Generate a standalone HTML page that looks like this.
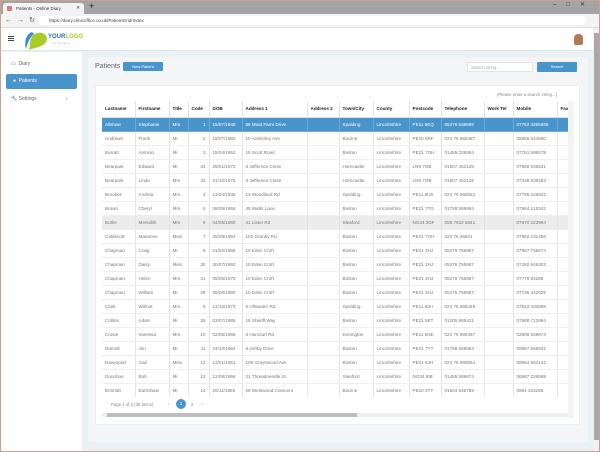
<!DOCTYPE html>
<html><head><meta charset="utf-8"><style>
*{box-sizing:border-box;margin:0;padding:0}
body{width:600px;height:452px;overflow:hidden;font-family:"Liberation Sans",sans-serif;background:#eaf1f4;position:relative;color:#666}
.a{position:absolute}
#frame{left:0;top:0;width:600px;height:452px;border:1px solid #c9a292;z-index:20;pointer-events:none}
table{border-collapse:collapse;table-layout:fixed;font-size:4.6px}
td,th{height:14px;border-right:1px solid #e4e4e4;border-bottom:1px solid #eee;padding:0 3px;white-space:nowrap;overflow:hidden;text-align:left;color:#777}
th{font-weight:bold;color:#222;height:16px;border-bottom:1px solid #ddd}
tr.sel td{background:#4a94cc;color:#fff;border-color:#6aa8d6}
tr.g td{background:#ececec}
td.r{text-align:right}
</style></head><body>
<div class="a" id="frame"></div>
<div class="a" style="left:0;top:0;width:600px;height:14px;background:#a4a4a4"></div>
<div class="a" style="left:3px;top:3px;width:81px;height:11px;background:#f3f3f3;border-radius:3px 3px 0 0;font-size:4.5px;color:#333;padding:3px 0 0 13px">Patients - Online Diary<span style="position:absolute;left:4px;top:3px;width:5px;height:5px;background:#d77;border-radius:1px"></span><span style="position:absolute;right:4px;top:2px">✕</span></div>
<div class="a" style="left:89px;top:1px;font-size:9px;color:#222">+</div>
<div class="a" style="left:553px;top:1px;font-size:6px;color:#333;letter-spacing:10px">–□✕</div>
<div class="a" style="left:0;top:14px;width:600px;height:14px;background:#f3f3f3;border-bottom:1px solid #ddd"></div>
<div class="a" style="left:5px;top:16px;font-size:7px;color:#555;letter-spacing:5px">←→↻</div>
<div class="a" style="left:38px;top:16px;width:548px;height:9px;background:#fff;border-radius:5px;font-size:4.6px;color:#444;padding:2px 0 0 11px">https://diary.clinicoffice.co.uk/PatientGrid/Index</div>
<div class="a" style="left:0;top:28px;width:593px;height:23px;background:#fff;border-bottom:1.5px solid #dfe6ea"></div>
<div class="a" style="left:8px;top:36px;width:6px;height:1px;background:#444;box-shadow:0 2px 0 #444,0 4px 0 #444"></div>
<svg class="a" style="left:22px;top:30px" width="30" height="21"><path d="M10 2 C4 4 2 12 4 19 C6 12 8 7 12 4Z" fill="#3a8fd0"/><path d="M11 5 C18 0 28 4 24 12 C20 18 10 18 7 20 C8 14 8 8 11 5Z" fill="#a8cc2a"/></svg>
<div class="a" style="left:48px;top:34px;font-size:6px;font-weight:bold;color:#2b6db0">YOUR<span style="color:#a8cc2a">LOGO</span></div>
<div class="a" style="left:52px;top:41px;font-size:3px;color:#999;letter-spacing:1px">company</div>
<div class="a" style="left:574px;top:34px;width:9px;height:11px;background:#b07a55;border-radius:4px 4px 2px 2px"></div>
<div class="a" style="left:593px;top:28px;width:7px;height:424px;background:#f1f1f1"></div>
<div class="a" style="left:594px;top:33px;width:5px;height:407px;background:#a9a9a9"></div>
<div class="a" style="left:1px;top:52px;width:81px;height:400px;background:#fff"></div>
<div class="a" style="left:11px;top:61px;font-size:5px;color:#666">▭ &nbsp;Diary</div>
<div class="a" style="left:6px;top:74px;width:71px;height:15px;background:#4a94cc;border-radius:2px;font-size:5px;color:#fff;padding:4px 0 0 7px">● &nbsp;Patients</div>
<div class="a" style="left:11px;top:96px;font-size:5px;color:#666">🔧 Settings<span style="position:absolute;left:55px">‹</span></div>
<div class="a" style="left:88px;top:57px;width:500px;height:385px;background:#f3f5f6;border-radius:2px"></div>
<div class="a" style="left:95px;top:63px;font-size:7px;color:#666">Patients</div>
<div class="a" style="left:123px;top:62px;width:40px;height:9px;background:#4a94cc;border-radius:1px;font-size:4px;color:#fff;text-align:center;line-height:9px">New Patient</div>
<div class="a" style="left:467px;top:62px;width:66px;height:10px;background:#fff;border:1px solid #e4e4e4;font-size:4.3px;color:#aaa;padding:2px 0 0 3px">Search string...</div>
<div class="a" style="left:537px;top:62px;width:40px;height:10px;background:#4a94cc;border-radius:1px;font-size:4px;color:#fff;text-align:center;line-height:10px">Search</div>
<div class="a" style="left:95px;top:85px;width:485px;height:340px;background:#fff;border:1px solid #eee"></div>
<div class="a" style="left:497px;top:92px;font-size:4.3px;color:#888">(Please enter a search string...)</div>
<div class="a" style="left:102px;top:101px;width:466px;height:317px;overflow:hidden;background:#fff">
<table style="width:490px">
<colgroup><col style="width:33px"><col style="width:34px"><col style="width:19px"><col style="width:21px"><col style="width:33px"><col style="width:65px"><col style="width:32px"><col style="width:34px"><col style="width:36px"><col style="width:32px"><col style="width:43px"><col style="width:29px"><col style="width:44px"><col style="width:35px"></colgroup>
<tr><th>Lastname</th><th>Firstname</th><th>Title</th><th>Code</th><th>DOB</th><th>Address 1</th><th>Address 2</th><th>Town/City</th><th>County</th><th>Postcode</th><th>Telephone</th><th>Work Tel</th><th>Mobile</th><th>Fax</th></tr>
<tr class="sel"><td>Allshaw</td><td>Stephanie</td><td>Mrs</td><td class="r">1</td><td>15/07/1940</td><td>85 Moat Farm Drive</td><td></td><td>Spalding</td><td>Lincolnshire</td><td>PE11 9EQ</td><td>05276 536985</td><td></td><td>07752 3265985</td><td></td></tr>
<tr><td>Andrews</td><td>Frank</td><td>Mr</td><td class="r">2</td><td>18/07/1960</td><td>10 Amberley Ave</td><td></td><td>Bourne</td><td>Lincolnshire</td><td>PE10 5RF</td><td>024 76 655487</td><td></td><td>05856 644690</td><td></td></tr>
<tr><td>Barratt</td><td>Antonio</td><td>Mr</td><td class="r">3</td><td>15/04/1952</td><td>15 Scott Road</td><td></td><td>Boston</td><td>Lincolnshire</td><td>PE21 7OH</td><td>01455 326954</td><td></td><td>07761 598478</td><td></td></tr>
<tr><td>Bearpark</td><td>Edward</td><td>Mr</td><td class="r">34</td><td>25/01/1972</td><td>3 Jefferson Close</td><td></td><td>Horncastle</td><td>Lincolnshire</td><td>LN9 7OB</td><td>01507 452135</td><td></td><td>07868 535531</td><td></td></tr>
<tr><td>Bearpark</td><td>Linda</td><td>Mrs</td><td class="r">33</td><td>21/10/1975</td><td>3 Jefferson Close</td><td></td><td>Horncastle</td><td>Lincolnshire</td><td>LN9 7OB</td><td>01507 452135</td><td></td><td>07336 839283</td><td></td></tr>
<tr><td>Brookes</td><td>Andrea</td><td>Mrs</td><td class="r">4</td><td>13/04/1935</td><td>13 Woodland Rd</td><td></td><td>Spalding</td><td>Lincolnshire</td><td>PE11 8US</td><td>024 76 566652</td><td></td><td>07795 226532</td><td></td></tr>
<tr><td>Brown</td><td>Cheryl</td><td>Mrs</td><td class="r">5</td><td>08/09/1955</td><td>45 Watts Lane</td><td></td><td>Boston</td><td>Lincolnshire</td><td>PE21 7TG</td><td>01788 559984</td><td></td><td>07984 215342</td><td></td></tr>
<tr class="g"><td>Butler</td><td>Meredith</td><td>Mrs</td><td class="r">6</td><td>04/05/1960</td><td>41 Lister Rd</td><td></td><td>Sleaford</td><td>Lincolnshire</td><td>NG34 3DF</td><td>058 7632 5841</td><td></td><td>07970 223984</td><td></td></tr>
<tr><td>Caldecott</td><td>Marianne</td><td>Miss</td><td class="r">7</td><td>25/09/1954</td><td>102 Granby Rd</td><td></td><td>Boston</td><td>Lincolnshire</td><td>PE21 7OH</td><td>024 76 45621</td><td></td><td>07982 231456</td><td></td></tr>
<tr><td>Chapman</td><td>Craig</td><td>Mr</td><td class="r">8</td><td>01/02/1968</td><td>10 Eden Croft</td><td></td><td>Boston</td><td>Lincolnshire</td><td>PE21 3HJ</td><td>05276 755987</td><td></td><td>07987 755874</td><td></td></tr>
<tr><td>Chapman</td><td>Daisy</td><td>Miss</td><td class="r">30</td><td>30/07/1992</td><td>10 Eden Croft</td><td></td><td>Boston</td><td>Lincolnshire</td><td>PE21 3HJ</td><td>05276 755987</td><td></td><td>07280 645303</td><td></td></tr>
<tr><td>Chapman</td><td>Helen</td><td>Mrs</td><td class="r">31</td><td>05/06/1970</td><td>10 Eden Croft</td><td></td><td>Boston</td><td>Lincolnshire</td><td>PE21 3HJ</td><td>05276 755987</td><td></td><td>07779 94285</td><td></td></tr>
<tr><td>Chapman</td><td>William</td><td>Mr</td><td class="r">29</td><td>06/06/1990</td><td>10 Eden Croft</td><td></td><td>Boston</td><td>Lincolnshire</td><td>PE21 3HJ</td><td>05276 755987</td><td></td><td>07735 442025</td><td></td></tr>
<tr><td>Clark</td><td>Wilmot</td><td>Mrs</td><td class="r">9</td><td>13/10/1973</td><td>6 Ullswater Rd</td><td></td><td>Spalding</td><td>Lincolnshire</td><td>PE11 8JH</td><td>024 76 665448</td><td></td><td>07542 332698</td><td></td></tr>
<tr><td>Collins</td><td>Adam</td><td>Mr</td><td class="r">25</td><td>03/07/1985</td><td>15 Sheriff Way</td><td></td><td>Boston</td><td>Lincolnshire</td><td>PE21 9ET</td><td>01205 985421</td><td></td><td>07968 712954</td><td></td></tr>
<tr><td>Crowe</td><td>Vanessa</td><td>Mrs</td><td class="r">10</td><td>02/05/1958</td><td>3 Harcourt Rd</td><td></td><td>Donington</td><td>Lincolnshire</td><td>PE11 6NE</td><td>024 76 665467</td><td></td><td>02698 559874</td><td></td></tr>
<tr><td>Darnell</td><td>Jim</td><td>Mr</td><td class="r">11</td><td>24/10/1964</td><td>9 Ashby Drive</td><td></td><td>Boston</td><td>Lincolnshire</td><td>PE21 7YT</td><td>01788 569884</td><td></td><td>09987 569832</td><td></td></tr>
<tr><td>Davenport</td><td>Gail</td><td>Miss</td><td class="r">12</td><td>13/01/1951</td><td>109 Grayswood Ave</td><td></td><td>Boston</td><td>Lincolnshire</td><td>PE21 8JH</td><td>024 76 986854</td><td></td><td>09854 652142</td><td></td></tr>
<tr><td>Donohoe</td><td>Bob</td><td>Mr</td><td class="r">13</td><td>12/08/1966</td><td>21 Threadneedle St</td><td></td><td>Sleaford</td><td>Lincolnshire</td><td>NG34 9IB</td><td>01455 559874</td><td></td><td>06987 226598</td><td></td></tr>
<tr><td>Emmott</td><td>Earnshaw</td><td>Mr</td><td class="r">14</td><td>26/11/1950</td><td>28 Westwood Crescent</td><td></td><td>Bourne</td><td>Lincolnshire</td><td>PE10 3TY</td><td>01604 546789</td><td></td><td>0961 343255</td><td></td></tr>
</table>
<div style="position:absolute;left:0;top:296px;width:466px;height:16px;background:#fff;font-size:4.3px;color:#888">
<span style="position:absolute;left:9px;top:5px">Page 1 of 2 (35 items)</span>
<span style="position:absolute;left:66px;top:4px">‹</span>
<span style="position:absolute;left:74px;top:2px;width:10px;height:10px;border-radius:5px;background:#4a94cc;color:#fff;text-align:center;line-height:10px">1</span>
<span style="position:absolute;left:89px;top:5px">2</span>
<span style="position:absolute;left:99px;top:4px">›</span>
</div>
<div style="position:absolute;left:0;top:312px;width:466px;height:4px;background:#eee"></div>
<div style="position:absolute;left:5px;top:312px;width:250px;height:4px;background:#bdbdbd"></div>
</div>
<div class="a" style="left:568px;top:101px;width:6px;height:317px;background:#f3f3f3"></div>
</body></html>
